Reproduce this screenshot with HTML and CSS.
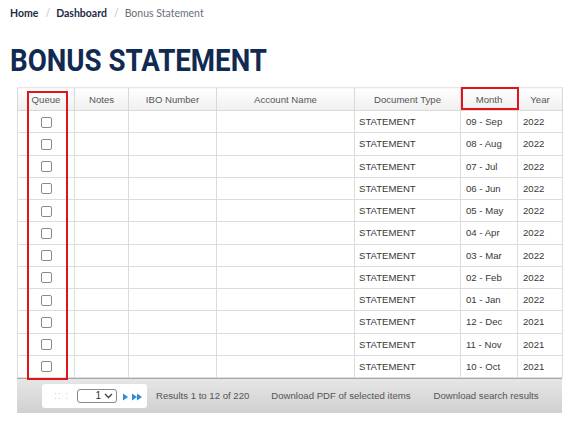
FILE: index.html
```html
<!DOCTYPE html>
<html>
<head>
<meta charset="utf-8">
<link rel="stylesheet" href="styles.css">
</head>
<body>
<nav class="crumbs">
  <a class="crumb-link">Home</a><span class="sep">/</span><a class="crumb-link">Dashboard</a><span class="sep">/</span><span class="crumb-current">Bonus Statement</span>
</nav>
<h1 class="title"><span class="title-text">BONUS STATEMENT</span></h1>
<div class="grid-wrap">
  <table class="grid">
    <colgroup>
      <col class="c-queue"><col class="c-notes"><col class="c-ibo"><col class="c-acct"><col class="c-doc"><col class="c-month"><col class="c-year">
    </colgroup>
    <thead>
      <tr><th>Queue</th><th>Notes</th><th>IBO Number</th><th>Account Name</th><th>Document Type</th><th>Month</th><th>Year</th></tr>
    </thead>
    <tbody>
      <tr><td class="cb"><span class="box"></span></td><td></td><td></td><td></td><td class="doc">STATEMENT</td><td class="mon">09 - Sep</td><td class="yr">2022</td></tr>
      <tr><td class="cb"><span class="box"></span></td><td></td><td></td><td></td><td class="doc">STATEMENT</td><td class="mon">08 - Aug</td><td class="yr">2022</td></tr>
      <tr><td class="cb"><span class="box"></span></td><td></td><td></td><td></td><td class="doc">STATEMENT</td><td class="mon">07 - Jul</td><td class="yr">2022</td></tr>
      <tr><td class="cb"><span class="box"></span></td><td></td><td></td><td></td><td class="doc">STATEMENT</td><td class="mon">06 - Jun</td><td class="yr">2022</td></tr>
      <tr><td class="cb"><span class="box"></span></td><td></td><td></td><td></td><td class="doc">STATEMENT</td><td class="mon">05 - May</td><td class="yr">2022</td></tr>
      <tr><td class="cb"><span class="box"></span></td><td></td><td></td><td></td><td class="doc">STATEMENT</td><td class="mon">04 - Apr</td><td class="yr">2022</td></tr>
      <tr><td class="cb"><span class="box"></span></td><td></td><td></td><td></td><td class="doc">STATEMENT</td><td class="mon">03 - Mar</td><td class="yr">2022</td></tr>
      <tr><td class="cb"><span class="box"></span></td><td></td><td></td><td></td><td class="doc">STATEMENT</td><td class="mon">02 - Feb</td><td class="yr">2022</td></tr>
      <tr><td class="cb"><span class="box"></span></td><td></td><td></td><td></td><td class="doc">STATEMENT</td><td class="mon">01 - Jan</td><td class="yr">2022</td></tr>
      <tr><td class="cb"><span class="box"></span></td><td></td><td></td><td></td><td class="doc">STATEMENT</td><td class="mon">12 - Dec</td><td class="yr">2021</td></tr>
      <tr><td class="cb"><span class="box"></span></td><td></td><td></td><td></td><td class="doc">STATEMENT</td><td class="mon">11 - Nov</td><td class="yr">2021</td></tr>
      <tr><td class="cb"><span class="box"></span></td><td></td><td></td><td></td><td class="doc">STATEMENT</td><td class="mon">10 - Oct</td><td class="yr">2021</td></tr>
    </tbody>
  </table>
  <div class="footer">
    <div class="pager">
      <span class="dots">:: :</span>
      <span class="select">1<svg class="chev" width="9" height="6" viewBox="0 0 9 6"><path d="M1 1 L4.5 4.5 L8 1" fill="none" stroke="#444" stroke-width="1.4"/></svg></span>
      <svg class="arrows" width="22" height="8" viewBox="0 0 22 8"><path d="M1 0.5 L6 4 L1 7.5 Z" fill="#2b8ed3"/><path d="M10 0.5 L15 4 L10 7.5 Z M15 0.5 L20 4 L15 7.5 Z" fill="#2b8ed3"/></svg>
    </div>
    <span class="results">Results 1 to 12 of 220</span>
    <span class="action act-pdf">Download PDF of selected items</span>
    <span class="action act-search">Download search results</span>
  </div>
  <div class="hl hl-queue"></div>
  <div class="hl hl-month"></div>
</div>
</body>
</html>
```
FILE: styles.css
```css
html, body {
  margin: 0;
  padding: 0;
  background: #ffffff;
}
body {
  font-family: "Liberation Sans", Arial, sans-serif;
  width: 577px;
  height: 423px;
  overflow: hidden;
}
.crumbs {
  font-family: Lato, "Open Sans", sans-serif;
  font-size: 10.5px;
  line-height: 14px;
  padding: 6px 0 0 10px;
  color: #6a6f78;
  white-space: nowrap;
}
.crumb-link {
  color: #1d2b45;
  font-weight: 700;
}
.sep {
  color: #b9bdc4;
  margin: 0 6px 0 7px;
}
.crumb-current {
  color: #6a6f78;
}
.title {
  margin: 23px 0 0 10px;
  font-family: Roboto, "Liberation Sans", sans-serif;
  font-weight: 700;
  font-size: 32px;
  line-height: 34px;
  color: #102a52;
  height: 34px;
  white-space: nowrap;
}
.title-text {
  display: inline-block;
  transform: scaleX(0.865);
  transform-origin: left center;
}
.grid-wrap {
  position: relative;
  margin: 10px 0 0 17px;
  width: 545px;
}
.grid {
  border-collapse: collapse;
  table-layout: fixed;
  width: 545px;
  font-size: 9.6px;
  color: #383838;
}
.c-queue { width: 57px; }
.c-notes { width: 54px; }
.c-ibo { width: 88px; }
.c-acct { width: 138px; }
.c-doc { width: 106px; }
.c-month { width: 57px; }
.c-year { width: 45px; }
.grid th {
  height: 22px;
  padding: 0;
  font-weight: 400;
  color: #555;
  text-align: center;
  background: linear-gradient(#ffffff, #efefef);
  border: 1px solid #d9d9d9;
  border-top: 1px solid #e6e6e6;
}
.grid td {
  height: 21.25px;
  padding: 0;
  border: 1px solid #dcdcdc;
  vertical-align: middle;
}
.grid td.doc { padding-left: 4px; }
.grid td.mon { padding-left: 5px; }
.grid td.yr { padding-left: 5px; }
.grid td.cb { text-align: center; }
.box {
  display: inline-block;
  width: 9px;
  height: 9px;
  border: 1px solid #8a8a8a;
  border-radius: 2px;
  vertical-align: middle;
  background: #fff;
}
.footer {
  display: flex;
  align-items: center;
  height: 34px;
  border-top: 1px solid #a8a8a8;
  background: linear-gradient(#e6e6e6, #d0d0d0);
  font-size: 9.6px;
  color: #555;
  white-space: nowrap;
}
.pager {
  display: flex;
  align-items: center;
  flex: none;
  margin-left: 25px;
  width: 105px;
  height: 24px;
  margin-top: -1px;
  background: #fff;
  border-radius: 3px;
  box-sizing: border-box;
  padding-left: 12px;
}
.dots {
  color: #d0d0d0;
  font-size: 10px;
  letter-spacing: 1px;
  width: 23px;
}
.select {
  display: flex;
  align-items: center;
  justify-content: flex-end;
  box-sizing: border-box;
  width: 40px;
  height: 14px;
  border: 1px solid #888;
  border-radius: 3px;
  padding-right: 3px;
  color: #333;
  font-size: 10px;
}
.chev { margin-left: 3px; }
.arrows { margin-left: 5px; margin-top: 3px; }
.results { margin-left: 9px; margin-top: -2px; }
.action { margin-top: -2px; }
.act-pdf { margin-left: 22px; }
.act-search { margin-left: 23px; }
.hl {
  position: absolute;
  border: 2px solid #e0141b;
  box-sizing: border-box;
}
.hl-queue {
  left: 10px;
  top: 4px;
  width: 41px;
  height: 289px;
}
.hl-month {
  left: 444px;
  top: 0;
  width: 58px;
  height: 23px;
}
```
